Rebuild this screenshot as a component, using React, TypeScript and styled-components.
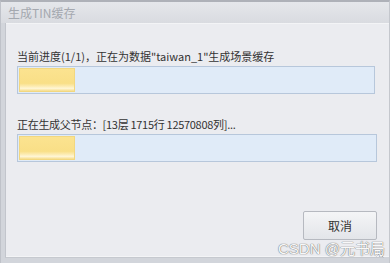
import React from "react";
import styled, { createGlobalStyle } from "styled-components";

const Global = createGlobalStyle`
  html, body { margin: 0; padding: 0; background: #d0d3d9; }
  #root { width: 390px; height: 263px; }
`;

const Window = styled.div`
  position: relative;
  box-sizing: border-box;
  width: 390px;
  height: 263px;
  display: flex;
  flex-direction: column;
  background: #d2d5db;
  border-top: 2px solid #aeb1b8;
  border-left: 1px solid #bfc2c9;
  border-right: 1px solid #c4c7cd;
  font-family: "Noto Sans CJK SC", "Noto Sans", sans-serif;
`;

const TitleBar = styled.div`
  height: 21px;
  flex: none;
  display: flex;
  align-items: center;
  padding-left: 7px;
  background: linear-gradient(to bottom, #e5e7eb, #d9dbe0);
  color: #a4a8af;
  font-size: 12px;
`;

const Body = styled.div`
  flex: 1;
  display: flex;
  margin: 0 5px 5px 4px;
  border-left: 1px solid #c2c5cc;
  border-right: 1px solid #b9bcc3;
  border-bottom: 1px solid #c6c9cf;
`;

const Content = styled.div`
  flex: 1;
  display: flex;
  flex-direction: column;
  box-sizing: border-box;
  background: #ebecf0;
  border-top: 1px solid #f3f4f6;
  border-bottom: 1px solid #f3f4f6;
  padding: 24px 12px 0 11px;
`;

const Label = styled.div<{ $mt?: number; $ls?: number }>`
  margin-top: ${(p) => p.$mt ?? 0}px;
  font-size: 11px;
  line-height: 16px;
  letter-spacing: ${(p) => p.$ls ?? 0}px;
  color: #333;
  white-space: nowrap;
`;

const Track = styled.div<{ $w: number }>`
  box-sizing: border-box;
  width: ${(p) => p.$w}px;
  height: 28px;
  margin-top: 2px;
  padding: 1px;
  background: #e0ebf8;
  border: 1px solid #b7c7db;
`;

const Fill = styled.div`
  box-sizing: border-box;
  height: 100%;
  border: 1px solid #f2d77f;
  background: linear-gradient(
    to bottom,
    #fbe390 0%,
    #f9df87 65%,
    #fdefbd 82%,
    #fff6d6 88%,
    #f6dd8c 100%
  );
`;

const Footer = styled.div`
  display: flex;
  justify-content: flex-end;
  margin-top: 49px;
`;

const Button = styled.button`
  box-sizing: border-box;
  width: 74px;
  height: 29px;
  border: 1px solid #b6b9c0;
  border-radius: 2px;
  background: linear-gradient(to bottom, #f4f5f7, #e3e5e9);
  font-family: "Noto Sans CJK SC", sans-serif;
  font-size: 12px;
  color: #333;
  padding: 0;
`;

const Watermark = styled.div`
  position: absolute;
  left: 277px;
  top: 236px;
  font-family: "Liberation Sans", "Noto Sans CJK SC", sans-serif;
  font-size: 15px;
  line-height: 22px;
  color: #f8f8f8;
  text-shadow: 0 0 1px #6f6f6f, 0 0 1px #6f6f6f;
  white-space: nowrap;
`;

const Grip = styled.svg`
  position: absolute;
  right: 6px;
  bottom: 6px;
`;

export default function App() {
  const fill = 56;
  return (
    <>
      <Global />
      <Window>
        <TitleBar>生成TIN缓存</TitleBar>
        <Body>
          <Content>
            <Label>当前进度(1/1)，正在为数据"taiwan_1"生成场景缓存</Label>
            <Track $w={358}>
              <Fill style={{ width: fill }} />
            </Track>
            <Label $mt={22} $ls={-0.3}>正在生成父节点：[13层 1715行 12570808列]...</Label>
            <Track $w={360}>
              <Fill style={{ width: fill }} />
            </Track>
            <Footer>
              <Button>取消</Button>
            </Footer>
          </Content>
        </Body>
        <Grip width="8" height="8" viewBox="0 0 8 8">
          <path d="M8 1 L1 8 M8 4 L4 8 M8 7 L7 8" stroke="#9a9da4" strokeWidth="1" strokeDasharray="1 1" />
        </Grip>
        <Watermark>CSDN @元书局</Watermark>
      </Window>
    </>
  );
}
